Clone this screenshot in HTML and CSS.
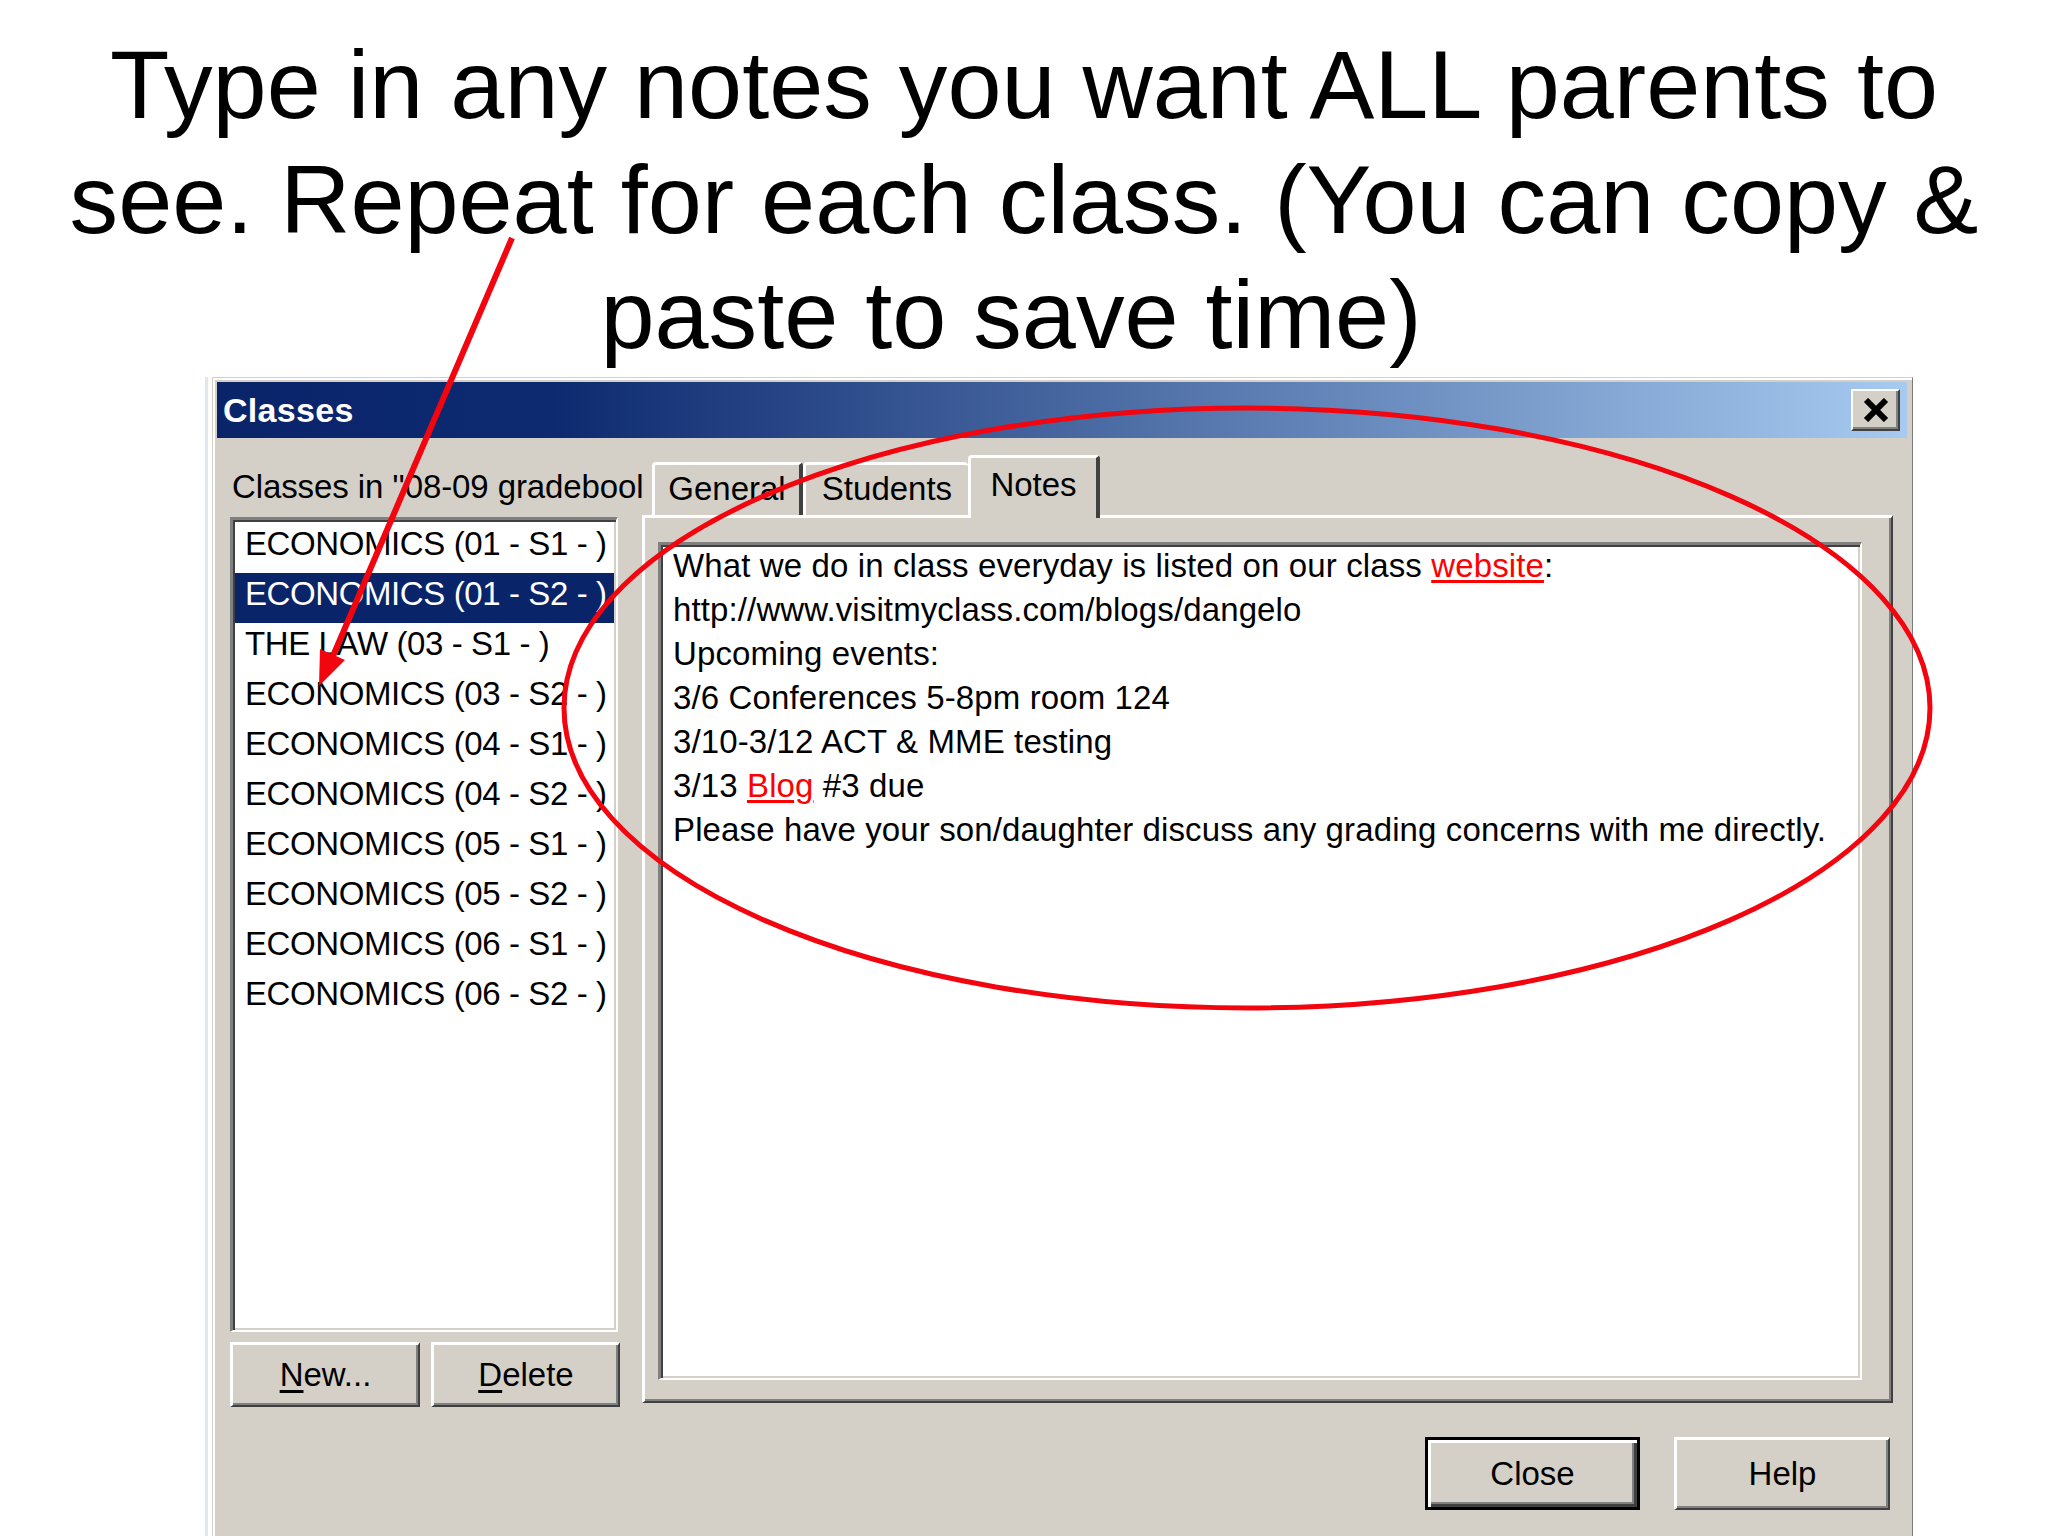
FILE: index.html
```html
<!DOCTYPE html>
<html>
<head>
<meta charset="utf-8">
<link rel="stylesheet" href="styles.css">
</head>
<body>
<h1 class="headline">Type in any notes you want ALL parents to<br>see. Repeat for each class. (You can copy &amp;<br><span class="line3">paste to save time)</span></h1>

<div class="dialog">
  <div class="titlebar">
    <span class="title">Classes</span>
    <div class="xbtn">
      <svg width="26" height="24" viewBox="0 0 26 24"><path d="M3 2 L23 22 M23 2 L3 22" stroke="#000" stroke-width="6" fill="none"/></svg>
    </div>
  </div>
  <div class="content">
    <div class="leftcol">
      <div class="label">Classes in ''08-09 gradebool</div>
      <ul class="listbox">
        <li>ECONOMICS (01 - S1 - )</li>
        <li class="sel">ECONOMICS (01 - S2 - )</li>
        <li>THE LAW (03 - S1 - )</li>
        <li>ECONOMICS (03 - S2 - )</li>
        <li>ECONOMICS (04 - S1 - )</li>
        <li>ECONOMICS (04 - S2 - )</li>
        <li>ECONOMICS (05 - S1 - )</li>
        <li>ECONOMICS (05 - S2 - )</li>
        <li>ECONOMICS (06 - S1 - )</li>
        <li>ECONOMICS (06 - S2 - )</li>
      </ul>
      <div class="btnrow">
        <div class="btn btn-new"><u>N</u>ew...</div>
        <div class="btn btn-del"><u>D</u>elete</div>
      </div>
    </div>
    <div class="rightcol">
      <div class="tabs">
        <div class="tab tab-general">General</div>
        <div class="tab tab-students">Students</div>
        <div class="tab tab-notes active">Notes</div>
      </div>
      <div class="panel">
        <div class="textbox">
          <div class="notes">
            <div>What we do in class everyday is listed on our class <span class="link">website</span>:</div>
            <div>http://www.visitmyclass.com/blogs/dangelo</div>
            <div>Upcoming events:</div>
            <div>3/6 Conferences 5-8pm room 124</div>
            <div>3/10-3/12 ACT &amp; MME testing</div>
            <div>3/13 <span class="link">Blog</span> #3 due</div>
            <div>Please have your son/daughter discuss any grading concerns with me directly.</div>
          </div>
        </div>
      </div>
    </div>
  </div>
  <div class="footer">
    <div class="btn btn-close">Close</div>
    <div class="btn btn-help">Help</div>
  </div>
</div>

<svg class="annot" width="2048" height="1536" viewBox="0 0 2048 1536">
  <ellipse cx="1247" cy="708" rx="683" ry="300" fill="none" stroke="#f2050f" stroke-width="5"/>
  <line x1="512" y1="238" x2="333" y2="656" stroke="#f2050f" stroke-width="6"/>
  <polygon points="319,686 345,660 320,649" fill="#f2050f"/>
</svg>
</body>
</html>
```

FILE: styles.css
```css
html, body {
  margin: 0;
  padding: 0;
}
body {
  width: 2048px;
  height: 1536px;
  overflow: hidden;
  position: relative;
  background: #ffffff;
  font-family: "Liberation Sans", Arial, sans-serif;
  color: #000;
}
.headline {
  margin: 0;
  padding-top: 27px;
  font-family: "Liberation Sans", Arial, sans-serif;
  font-weight: normal;
  font-size: 97.2px;
  line-height: 115px;
  text-align: center;
  white-space: nowrap;
}
.line3 {
  margin-right: 26px;
}

.dialog {
  margin: 5px 0 0 212px;
  width: 1701px;
  height: 1200px;
  box-sizing: border-box;
  background: #d4d0c8;
  border: 1px solid;
  border-color: #d4d0c8 #7c7c7c #7c7c7c #d4d0c8;
  padding: 4px 5px 0 4px;
  box-shadow: inset 2px 2px #ffffff, -4px 0 0 0 #ffffff, -7px 0 0 0 #dfe8ea;
  font-size: 33px;
}

.titlebar {
  height: 56px;
  background: linear-gradient(to right, #0a246a 0%, #0d2a70 20%, #a6caf0 100%);
  display: flex;
  align-items: center;
  justify-content: space-between;
  padding: 0 7px 0 6px;
}
.title {
  color: #fff;
  font-weight: bold;
  font-size: 34px;
  letter-spacing: 0.3px;
}
.xbtn {
  width: 49px;
  height: 42px;
  box-sizing: border-box;
  background: #d4d0c8;
  border-top: 2px solid #fff;
  border-left: 2px solid #fff;
  border-right: 2px solid #404040;
  border-bottom: 2px solid #404040;
  box-shadow: inset -2px -2px #808080;
  display: flex;
  align-items: center;
  justify-content: center;
}

.content {
  display: flex;
  gap: 22px;
  padding: 17px 14px 0 13px;
}
.leftcol {
  width: 390px;
  flex: none;
}
.label {
  margin-top: 10px;
  height: 44px;
  line-height: 44px;
  padding-left: 2px;
  white-space: nowrap;
  letter-spacing: -0.1px;
}
.listbox {
  list-style: none;
  margin: 8px 0 0 0;
  width: 388px;
  height: 815px;
  box-sizing: border-box;
  background: #fff;
  border-top: 3px solid #808080;
  border-left: 3px solid #808080;
  border-right: 2px solid #fff;
  border-bottom: 2px solid #fff;
  box-shadow: inset 2px 2px #404040, inset -2px -2px #d4d0c8;
  padding: 3px 2px 2px 2px;
}
.listbox li {
  height: 50px;
  line-height: 42px;
  padding-left: 10px;
  white-space: nowrap;
  letter-spacing: -0.4px;
}
.listbox li.sel {
  background: #0a246a;
  color: #fff;
}
.btnrow {
  display: flex;
  gap: 11px;
  margin-top: 10px;
}

.btn {
  box-sizing: border-box;
  display: flex;
  align-items: center;
  justify-content: center;
  background: #d4d0c8;
  border-top: 3px solid #fff;
  border-left: 3px solid #fff;
  border-right: 2px solid #404040;
  border-bottom: 2px solid #404040;
  box-shadow: inset -2px -2px #808080;
  font-size: 33px;
}
.btn u {
  text-decoration-thickness: 3px;
  text-underline-offset: 4px;
}
.btn-new { width: 190px; height: 65px; }
.btn-del { width: 189px; height: 65px; }

.rightcol {
  width: 1251px;
  flex: none;
}
.tabs {
  height: 60px;
  display: flex;
  align-items: flex-end;
  padding-left: 10px;
}
.tab {
  box-sizing: border-box;
  height: 53px;
  background: #d4d0c8;
  border-top: 3px solid #fff;
  border-left: 3px solid #fff;
  border-right: 4px solid #404040;
  border-top-left-radius: 4px;
  border-top-right-radius: 4px;
  text-align: center;
  line-height: 44px;
  padding-top: 2px;
  white-space: nowrap;
}
.tab-general { width: 151px; }
.tab-students { width: 165px; border-right: none; }
.tab-notes {
  width: 132px;
  height: 63px;
  margin-bottom: -3px;
  padding-top: 5px;
  position: relative;
  z-index: 1;
}
.panel {
  box-sizing: border-box;
  height: 888px;
  background: #d4d0c8;
  border-top: 3px solid #fff;
  border-left: 3px solid #fff;
  border-right: 2px solid #404040;
  border-bottom: 2px solid #404040;
  box-shadow: inset -2px -2px #808080;
  padding: 24px 0 0 13px;
}
.textbox {
  box-sizing: border-box;
  width: 1204px;
  height: 838px;
  background: #fff;
  border-top: 3px solid #808080;
  border-left: 3px solid #808080;
  border-right: 2px solid #fff;
  border-bottom: 2px solid #fff;
  box-shadow: inset 2px 2px #404040, inset -2px -2px #d4d0c8;
  padding: 0 10px 0 12px;
}
.notes {
  margin-top: -1px;
  line-height: 44px;
  white-space: nowrap;
  letter-spacing: 0.12px;
}
.link {
  color: #f00;
  text-decoration: underline;
  text-decoration-thickness: 3px;
  text-underline-offset: 3px;
}

.footer {
  display: flex;
  justify-content: flex-end;
  gap: 34px;
  margin-top: 30px;
  padding-right: 17px;
}
.btn-close {
  width: 215px;
  height: 73px;
  border: 3px solid #000;
  box-shadow: inset 3px 3px #fff, inset -3px -3px #404040, inset -5px -5px #808080;
}
.btn-help {
  width: 216px;
  height: 73px;
}

.annot {
  position: absolute;
  left: 0;
  top: 0;
  pointer-events: none;
}
```
